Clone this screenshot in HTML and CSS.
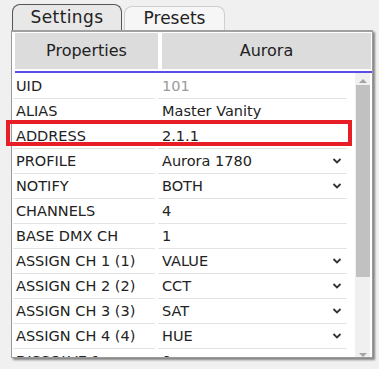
FILE: index.html
```html
<!DOCTYPE html>
<html>
<head>
<meta charset="utf-8">
<link rel="stylesheet" href="styles.css">
</head>
<body>
<div class="tabs">
  <div class="tab active">Settings</div>
  <div class="tab">Presets</div>
</div>
<div class="panel">
  <div class="head">
    <div class="hcell">Properties</div>
    <div class="hcell">Aurora</div>
  </div>
  <div class="rule"></div>
  <div class="body">
    <div class="rows">
      <div class="row"><div class="k">UID</div><div class="v muted">101</div></div>
      <div class="row"><div class="k">ALIAS</div><div class="v">Master Vanity</div></div>
      <div class="row"><div class="k">ADDRESS</div><div class="v">2.1.1</div></div>
      <div class="row"><div class="k">PROFILE</div><div class="v">Aurora 1780<svg class="chev" viewBox="0 0 9 6"><polyline points="1,1 4.5,4.5 8,1"/></svg></div></div>
      <div class="row"><div class="k">NOTIFY</div><div class="v">BOTH<svg class="chev" viewBox="0 0 9 6"><polyline points="1,1 4.5,4.5 8,1"/></svg></div></div>
      <div class="row"><div class="k">CHANNELS</div><div class="v">4</div></div>
      <div class="row"><div class="k">BASE DMX CH</div><div class="v">1</div></div>
      <div class="row"><div class="k">ASSIGN CH 1 (1)</div><div class="v">VALUE<svg class="chev" viewBox="0 0 9 6"><polyline points="1,1 4.5,4.5 8,1"/></svg></div></div>
      <div class="row"><div class="k">ASSIGN CH 2 (2)</div><div class="v">CCT<svg class="chev" viewBox="0 0 9 6"><polyline points="1,1 4.5,4.5 8,1"/></svg></div></div>
      <div class="row"><div class="k">ASSIGN CH 3 (3)</div><div class="v">SAT<svg class="chev" viewBox="0 0 9 6"><polyline points="1,1 4.5,4.5 8,1"/></svg></div></div>
      <div class="row"><div class="k">ASSIGN CH 4 (4)</div><div class="v">HUE<svg class="chev" viewBox="0 0 9 6"><polyline points="1,1 4.5,4.5 8,1"/></svg></div></div>
      <div class="row"><div class="k">DISSOLVE 1</div><div class="v">0</div></div>
    </div>
    <div class="scroll">
      <div class="arrow up"></div>
      <div class="thumb"></div>
      <div class="arrow down"></div>
    </div>
  </div>
</div>
<div class="highlight"></div>
</body>
</html>
```
FILE: styles.css
```css
html, body {
  margin: 0;
  padding: 0;
}
body {
  background: #f0f0f0;
  font-family: "DejaVu Sans", Verdana, sans-serif;
  color: #222;
  width: 379px;
  height: 369px;
  overflow: hidden;
  position: relative;
}
.tabs {
  display: flex;
  align-items: flex-end;
  gap: 2px;
  padding: 4px 0 0 12px;
  height: 26px;
}
.tab {
  box-sizing: border-box;
  width: 101px;
  height: 24px;
  border: 1px solid #cfcfcf;
  border-bottom: none;
  border-radius: 8px 8px 0 0;
  background: #f6f6f6;
  font-size: 17px;
  line-height: 22px;
  text-align: center;
  color: #222;
}
.tab.active {
  width: 110px;
  height: 26px;
  border-color: #555;
  background: #e8e8e8;
  line-height: 25px;
  letter-spacing: 0.4px;
}
.panel {
  box-sizing: border-box;
  margin-left: 11px;
  width: 362px;
  height: 328px;
  border: 1px solid #9a9a9a;
  border-top: 2px solid #a0a0a0;
  background: #fff;
  box-shadow: 2px 2px 2px rgba(0, 0, 0, 0.45);
  overflow: hidden;
}
.head {
  display: grid;
  grid-template-columns: 143px 1fr;
  gap: 4px;
  padding: 1px 1px 0 3px;
  height: 36px;
}
.hcell {
  background: #dcdcdc;
  font-size: 16px;
  line-height: 36px;
  text-align: center;
  color: #222;
}
.rule {
  margin: 2px 0 0 3px;
  height: 2px;
  background: #5b4ee6;
}
.body {
  display: flex;
  gap: 2px;
  padding-left: 1px;
  height: 290px;
}
.rows {
  width: 340px;
  padding-top: 1px;
}
.row {
  display: grid;
  grid-template-columns: 142px 189px;
  column-gap: 3px;
  height: 25px;
}
.k, .v {
  box-sizing: border-box;
  border-bottom: 1px solid #e3e3e3;
  font-size: 14.5px;
  line-height: 24px;
  white-space: nowrap;
}
.k {
  padding-left: 3px;
}
.v {
  padding-left: 4px;
  padding-right: 5px;
  display: flex;
  align-items: center;
  justify-content: space-between;
}
.muted {
  color: #9a9a9a;
}
.chev {
  width: 10px;
  height: 6px;
  fill: none;
  stroke: #333;
  stroke-width: 1.8;
}
.scroll {
  position: relative;
  width: 15px;
  background: #f0f0f0;
  display: flex;
  flex-direction: column;
  align-items: center;
}
.thumb {
  width: 14px;
  height: 192px;
  background: #c1c1c1;
  margin-top: 2px;
}
.arrow {
  width: 0;
  height: 0;
  border-left: 4px solid transparent;
  border-right: 4px solid transparent;
}
.arrow.up {
  margin-top: 6px;
  border-bottom: 4px solid #a3a3a3;
}
.arrow.down {
  margin-top: auto;
  margin-bottom: 6px;
  border-top: 4px solid #a3a3a3;
}
.highlight {
  position: absolute;
  left: 6px;
  top: 120px;
  width: 346px;
  height: 26px;
  box-sizing: border-box;
  border: 4px solid #e81e27;
}
```
